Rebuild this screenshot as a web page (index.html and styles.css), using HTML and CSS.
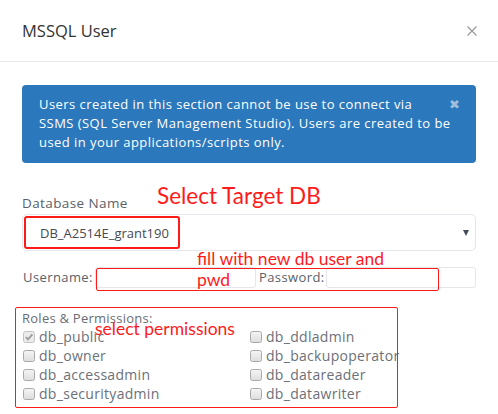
FILE: index.html
```html
<!DOCTYPE html>
<html>
<head>
<meta charset="utf-8">
<link rel="stylesheet" href="styles.css">
</head>
<body>
<div class="modal">
  <div class="modal-header">
    <h4 class="modal-title">MSSQL User</h4>
    <span class="close"><svg width="10" height="10" viewBox="0 0 10 10"><path d="M0.5 0.5L9.5 9.5M9.5 0.5L0.5 9.5" stroke="#9a9a9a" stroke-width="1.2" fill="none"/></svg></span>
  </div>
  <div class="modal-body">
    <div class="alert">
      <p class="alert-text">Users created in this section cannot be use to connect via<br>SSMS (SQL Server Management Studio). Users are created to be<br>used in your applications/scripts only.</p>
      <span class="alert-close">✖</span>
    </div>

    <div class="form-group">
      <label class="label">Database Name</label>
      <div class="select">
        <span class="select-value">DB_A2514E_grant190</span>
        <span class="caret"></span>
      </div>
    </div>

    <div class="creds">
      <label class="label label-user">Username:</label>
      <span class="input input-user"></span>
      <label class="label label-pass">Password:</label>
      <span class="input input-pass"></span>
    </div>

    <div class="roles">
      <div class="roles-title">Roles &amp; Permissions:</div>
      <div class="roles-grid">
        <div class="role"><span class="cb checked"><svg width="10" height="10" viewBox="0 0 10 10"><path d="M1.8 5.2L4 7.4L8.4 2.4" stroke="#9c9c9c" stroke-width="1.8" fill="none"/></svg></span>db_public</div>
        <div class="role"><span class="cb"></span>db_ddladmin</div>
        <div class="role"><span class="cb"></span>db_owner</div>
        <div class="role"><span class="cb"></span>db_backupoperator</div>
        <div class="role"><span class="cb"></span>db_accessadmin</div>
        <div class="role"><span class="cb"></span>db_datareader</div>
        <div class="role"><span class="cb"></span>db_securityadmin</div>
        <div class="role"><span class="cb"></span>db_datawriter</div>
      </div>
    </div>
  </div>
</div>

<div class="note note-db">Select Target DB</div>
<div class="mark mark-db"></div>
<div class="note note-creds">fill with new db user and<br>pwd</div>
<div class="mark mark-creds"></div>
<div class="note note-roles">select permissions</div>
<div class="mark mark-roles"></div>
</body>
</html>
```
FILE: styles.css
```css
* { box-sizing: border-box; }
html, body { margin: 0; padding: 0; background: #fff; }
body {
  font-family: "Open Sans", "DejaVu Sans", sans-serif;
  width: 498px;
  height: 414px;
  overflow: hidden;
  position: relative;
}
.modal { width: 498px; }
.modal-header {
  display: flex;
  align-items: center;
  justify-content: space-between;
  padding: 18px 21px 18px 22px;
  border-bottom: 1px solid #e9ebee;
  height: 62px;
}
.modal-title {
  margin: 0;
  font-size: 16.5px;
  font-weight: 400;
  color: #333;
  line-height: 25px;
}
.close { display: flex; width: 10px; height: 10px; }
.modal-body { padding: 23px 22px 0 22px; }
.alert {
  position: relative;
  background: #2b78bc;
  border-radius: 4px;
  height: 78px;
  padding: 10px 17px 0 17px;
}
.alert-text {
  margin: 0;
  color: #fff;
  font-size: 13px;
  letter-spacing: 0.45px;
  line-height: 19px;
  white-space: nowrap;
}
.alert-close {
  position: absolute;
  right: 16px;
  top: 10px;
  color: #a1bfdd;
  font-size: 13px;
  line-height: 19px;
  font-weight: 700;
}
.form-group { margin-top: 32px; }
.label {
  display: block;
  font-size: 13px;
  letter-spacing: 0.4px;
  color: #5a5f69;
  line-height: 17px;
  white-space: nowrap;
}
.form-group .label { font-size: 13.5px; margin-bottom: 2px; }
.select {
  display: flex;
  align-items: center;
  justify-content: space-between;
  height: 37px;
  border: 1px solid #e3e6ea;
  border-radius: 5px;
  padding: 0 6px 0 17px;
}
.select-value { font-size: 13px; color: #464a52; }
.caret {
  width: 0; height: 0;
  border-left: 3.5px solid transparent;
  border-right: 3.5px solid transparent;
  border-top: 6px solid #454c5a;
}
.creds {
  display: flex;
  align-items: center;
  margin-top: 16px;
  height: 21px;
}
.label-user { width: 73px; padding-left: 1px; }
.label-pass { width: 68px; padding-left: 1px; }
.input {
  display: block;
  height: 21px;
  border: 1px solid #e4e6e9;
  border-radius: 3px;
}
.input-user { width: 161px; margin-right: 2px; }
.input-pass { flex: 1; }
.roles { margin-top: 21px; }
.roles-title {
  font-size: 13px;
  letter-spacing: 0.25px;
  color: #696d75;
  line-height: 18px;
}
.roles-grid {
  display: grid;
  grid-template-columns: 227px 227px;
}
.role {
  display: flex;
  align-items: center;
  height: 19px;
  font-size: 14px;
  letter-spacing: 0.3px;
  color: #6c7079;
  padding-left: 1px;
  white-space: nowrap;
}
.cb {
  display: flex;
  align-items: center;
  justify-content: center;
  width: 12px;
  height: 12px;
  border: 1px solid #a9a9a9;
  border-radius: 2.5px;
  background: linear-gradient(#f4f4f4, #dedede);
  margin-right: 4px;
  flex: none;
}
.cb.checked { background: #ececec; border-color: #c2c2c2; }

.note {
  position: absolute;
  color: #ff1a1a;
  font-family: "Lato", "Liberation Sans", sans-serif;
  white-space: nowrap;
}
.note-db { left: 157px; top: 182px; font-size: 22.5px; line-height: 28px; }
.note-creds { left: 197px; top: 248px; font-size: 17.5px; line-height: 21px; }
.note-roles { left: 95px; top: 318px; font-size: 17.5px; line-height: 22px; }
.mark { position: absolute; border: 2px solid #ff1a1a; border-radius: 3px; }
.mark-db { left: 24px; top: 216px; width: 156px; height: 33px; }
.mark-creds { left: 96px; top: 268px; width: 343px; height: 23px; border-width: 1.5px; border-radius: 2px; }
.mark-roles { left: 15px; top: 307px; width: 383px; height: 101px; border-width: 1.5px; border-radius: 2px; }
```
